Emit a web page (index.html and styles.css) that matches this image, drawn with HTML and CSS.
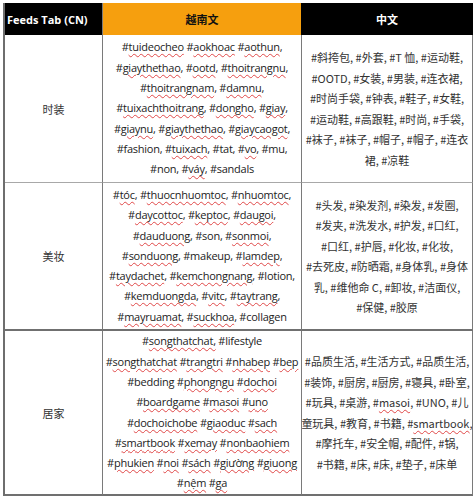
FILE: index.html
```html
<!DOCTYPE html>
<html>
<head>
<meta charset="utf-8">
<link rel="stylesheet" href="styles.css">
</head>
<body>
<div class="table">
  <div class="hdr h1">Feeds Tab (CN)</div>
  <div class="hdr h2">越南文</div>
  <div class="hdr h3">中文</div>

  <div class="cell label r1">时装</div>
  <div class="cell vi r1">
    <div class="ln">#<u>tuideocheo</u> #<u>aokhoac</u> #<u>aothun</u>,</div>
    <div class="ln">#<u>giaythethao</u>, #<u>ootd</u>, #<u>thoitrangnu</u>,</div>
    <div class="ln">#<u>thoitrangnam</u>, #<u>damnu</u>,</div>
    <div class="ln">#<u>tuixachthoitrang</u>, #<u>dongho</u>, #<u>giay</u>,</div>
    <div class="ln">#<u>giaynu</u>, #<u>giaythethao</u>, #<u>giaycaogot</u>,</div>
    <div class="ln">#fashion, #<u>tuixach</u>, #tat, #<u>vo</u>, #mu,</div>
    <div class="ln">#non, #<u>váy</u>, #sandals</div>
  </div>
  <div class="cell zh r1">
    <div class="ln">#斜挎包, #外套, #T 恤, #运动鞋,</div>
    <div class="ln">#OOTD, #女装, #男装, #连衣裙,</div>
    <div class="ln">#时尚手袋, #钟表, #鞋子, #女鞋,</div>
    <div class="ln">#运动鞋, #高跟鞋, #时尚, #手袋,</div>
    <div class="ln">#袜子, #袜子, #帽子, #帽子, #连衣</div>
    <div class="ln">裙, #凉鞋</div>
  </div>

  <div class="cell label r2">美妆</div>
  <div class="cell vi r2">
    <div class="ln">#<u>tóc</u>, #<u>thuocnhuomtoc</u>, #<u>nhuomtoc</u>,</div>
    <div class="ln">#<u>daycottoc</u>, #<u>keptoc</u>, #<u>daugoi</u>,</div>
    <div class="ln">#<u>dauduong</u>, #son, #<u>sonmoi</u>,</div>
    <div class="ln">#<u>sonduong</u>, #makeup, #<u>lamdep</u>,</div>
    <div class="ln">#<u>taydachet</u>, #<u>kemchongnang</u>, #lotion,</div>
    <div class="ln">#<u>kemduongda</u>, #<u>vitc</u>, #<u>taytrang</u>,</div>
    <div class="ln">#<u>mayruamat</u>, #<u>suckhoa</u>, #collagen</div>
  </div>
  <div class="cell zh r2">
    <div class="ln">#头发, #染发剂, #染发, #发圈,</div>
    <div class="ln">#发夹, #洗发水, #护发, #口红,</div>
    <div class="ln">#口红, #护唇, #化妆, #化妆,</div>
    <div class="ln">#去死皮, #防晒霜, #身体乳, #身体</div>
    <div class="ln">乳, #维他命 C, #卸妆, #洁面仪,</div>
    <div class="ln">#保健, #胶原</div>
  </div>

  <div class="cell label r3">居家</div>
  <div class="cell vi r3">
    <div class="ln">#<u>songthatchat,</u> #lifestyle</div>
    <div class="ln">#<u>songthatchat</u> #<u>trangtri</u> #<u>nhabep</u> #<u>bep</u></div>
    <div class="ln">#bedding #<u>phongngu</u> #<u>dochoi</u></div>
    <div class="ln">#<u>boardgame</u> #<u>masoi</u> #<u>uno</u></div>
    <div class="ln">#<u>dochoichobe</u> #<u>giaoduc</u> #<u>sach</u></div>
    <div class="ln">#<u>smartbook</u> #<u>xemay</u> #<u>nonbaohiem</u></div>
    <div class="ln">#<u>phukien</u> #<u>noi</u> #<u>sách</u> #<u>giường</u> #<u>giuong</u></div>
    <div class="ln">#<u>nệm</u> #<u>ga</u></div>
  </div>
  <div class="cell zh r3">
    <div class="ln">#品质生活, #生活方式, #品质生活,</div>
    <div class="ln">#装饰, #厨房, #厨房, #寝具, #卧室,</div>
    <div class="ln">#玩具, #桌游, #<u>masoi</u>, #UNO, #儿</div>
    <div class="ln">童玩具, #教育, #书籍, #<u>smartbook</u>,</div>
    <div class="ln">#摩托车, #安全帽, #配件, #锅,</div>
    <div class="ln">#书籍, #床, #床, #垫子, #床单</div>
  </div>
</div>
</body>
</html>
```
FILE: styles.css
```css
html, body {
  margin: 0;
  padding: 0;
  background: #ffffff;
}
body {
  padding: 3px 0 0 3px;
  font-family: "Noto Sans", "Noto Sans CJK SC", sans-serif;
  color: #222222;
}
.table {
  display: grid;
  grid-template-columns: 97px 199px 172px;
  grid-template-rows: 32px 148px 148px 165px;
  width: 468px;
  border-left: 2px solid #6e6e6e;
  box-sizing: border-box;
}
.hdr {
  display: flex;
  align-items: center;
  font-weight: bold;
  font-size: 11px;
  background: #000000;
  color: #ffffff;
}
.h1 {
  padding-left: 2px;
  font-family: "Open Sans", "Noto Sans", sans-serif;
}
.h2 {
  justify-content: center;
  background: #f69f0e;
  color: #111111;
  font-family: "Noto Sans CJK SC", sans-serif;
  border-left: 1px solid #7a7a7a;
}
.h3 {
  justify-content: center;
  font-family: "Noto Sans CJK SC", sans-serif;
}
.cell {
  display: flex;
  flex-direction: column;
  justify-content: center;
  align-items: center;
  border-bottom: 1px solid #a8a8a8;
  overflow: hidden;
}
.r2, .r3 {
  border-bottom: 2px solid #707070;
}
.label {
  font-family: "Noto Sans CJK SC", sans-serif;
  font-size: 11px;
  color: #333333;
}
.vi {
  border-left: 1px solid #7a7a7a;
  font-family: "Open Sans", "Noto Sans", sans-serif;
  font-size: 11px;
  line-height: 20.3px;
  letter-spacing: -0.25px;
}
.zh {
  border-left: 1px solid #7a7a7a;
  border-right: 1px solid #7a7a7a;
  font-family: "Noto Sans CJK SC", sans-serif;
  font-size: 11px;
  line-height: 20.5px;
  color: #333333;
}
.ln {
  white-space: nowrap;
  text-align: center;
}
u {
  text-decoration: underline wavy #e04848;
  text-decoration-thickness: 1px;
  text-underline-offset: 2px;
}
```
